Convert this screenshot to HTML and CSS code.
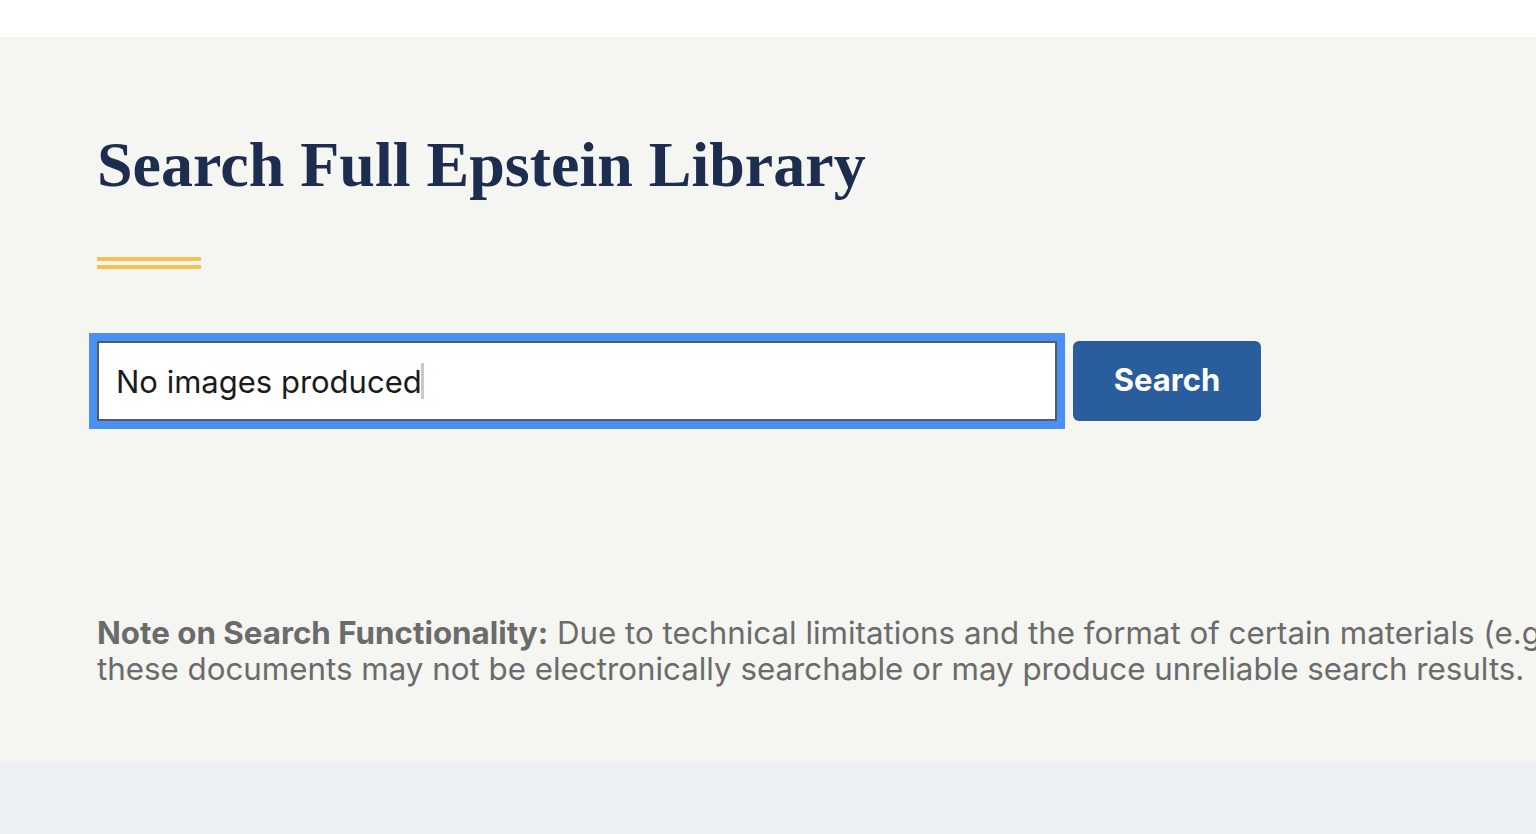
FILE: index.html
```html
<!DOCTYPE html>
<html lang="en">
<head>
<meta charset="utf-8">
<title>Search Full Epstein Library</title>
<link rel="stylesheet" href="styles.css">
</head>
<body>
<div class="topbar"></div>
<section class="search-section">
  <div class="container">
    <h1 class="title">Search Full Epstein Library</h1>
    <div class="rule"></div>
    <form class="search-form" onsubmit="return false">
      <div class="input-wrap">
        <input class="search-input" type="text" value="No images produced" aria-label="Search">
        <span class="caret"></span>
      </div>
      <button class="search-btn" type="submit">Search</button>
    </form>
    <p class="note"><strong>Note on Search Functionality:</strong> Due to technical limitations and the format of certain materials (e.g., handwritten text),<br>these documents may not be electronically searchable or may produce unreliable search results.</p>
  </div>
</section>
<div class="footer-band"></div>
</body>
</html>
```
FILE: styles.css
```css
html, body {
  margin: 0;
  padding: 0;
  overflow: hidden;
}
body {
  background: #edf0f5;
  font-family: Inter, "Noto Sans", sans-serif;
}
.topbar {
  height: 37px;
  background: #ffffff;
}
.search-section {
  background: #f5f5f1;
  height: 724px;
}
.container {
  padding: 0 0 0 97px;
  display: flex;
  flex-direction: column;
}
.title {
  margin: 0;
  padding-top: 93px;
  font-family: "Liberation Serif", serif;
  font-weight: 700;
  font-size: 64px;
  line-height: 70px;
  color: #1d2d50;
  white-space: nowrap;
}
.rule {
  width: 104px;
  height: 4px;
  margin-top: 57px;
  border-top: 4px solid #f5c04f;
  border-bottom: 4px solid #f5c04f;
}
.search-form {
  display: flex;
  align-items: stretch;
  gap: 16px;
  margin-top: 72px;
}
.input-wrap {
  position: relative;
  width: 960px;
  height: 80px;
}
.search-input {
  box-sizing: border-box;
  width: 100%;
  height: 100%;
  margin: 0;
  border: 2px solid #565c65;
  outline: 8px solid #4a8ff2;
  background: #ffffff;
  padding: 0 17px;
  font-family: Inter, "Noto Sans", sans-serif;
  font-size: 31px;
  color: #1b1b1b;
}
.caret {
  position: absolute;
  left: 324px;
  top: 22px;
  width: 3px;
  height: 36px;
  background: #c8c8c8;
}
.search-btn {
  width: 188px;
  height: 80px;
  padding: 0 0 3px;
  border: 0;
  border-radius: 6px;
  background: #295d9c;
  color: #ffffff;
  font-family: Inter, "Noto Sans", sans-serif;
  font-weight: 700;
  font-size: 31px;
  cursor: pointer;
}
.note {
  margin: 194px 0 0;
  font-size: 31.3px;
  line-height: 36px;
  color: #6b6b6b;
  white-space: nowrap;
}
.note strong {
  font-weight: 700;
}
```
